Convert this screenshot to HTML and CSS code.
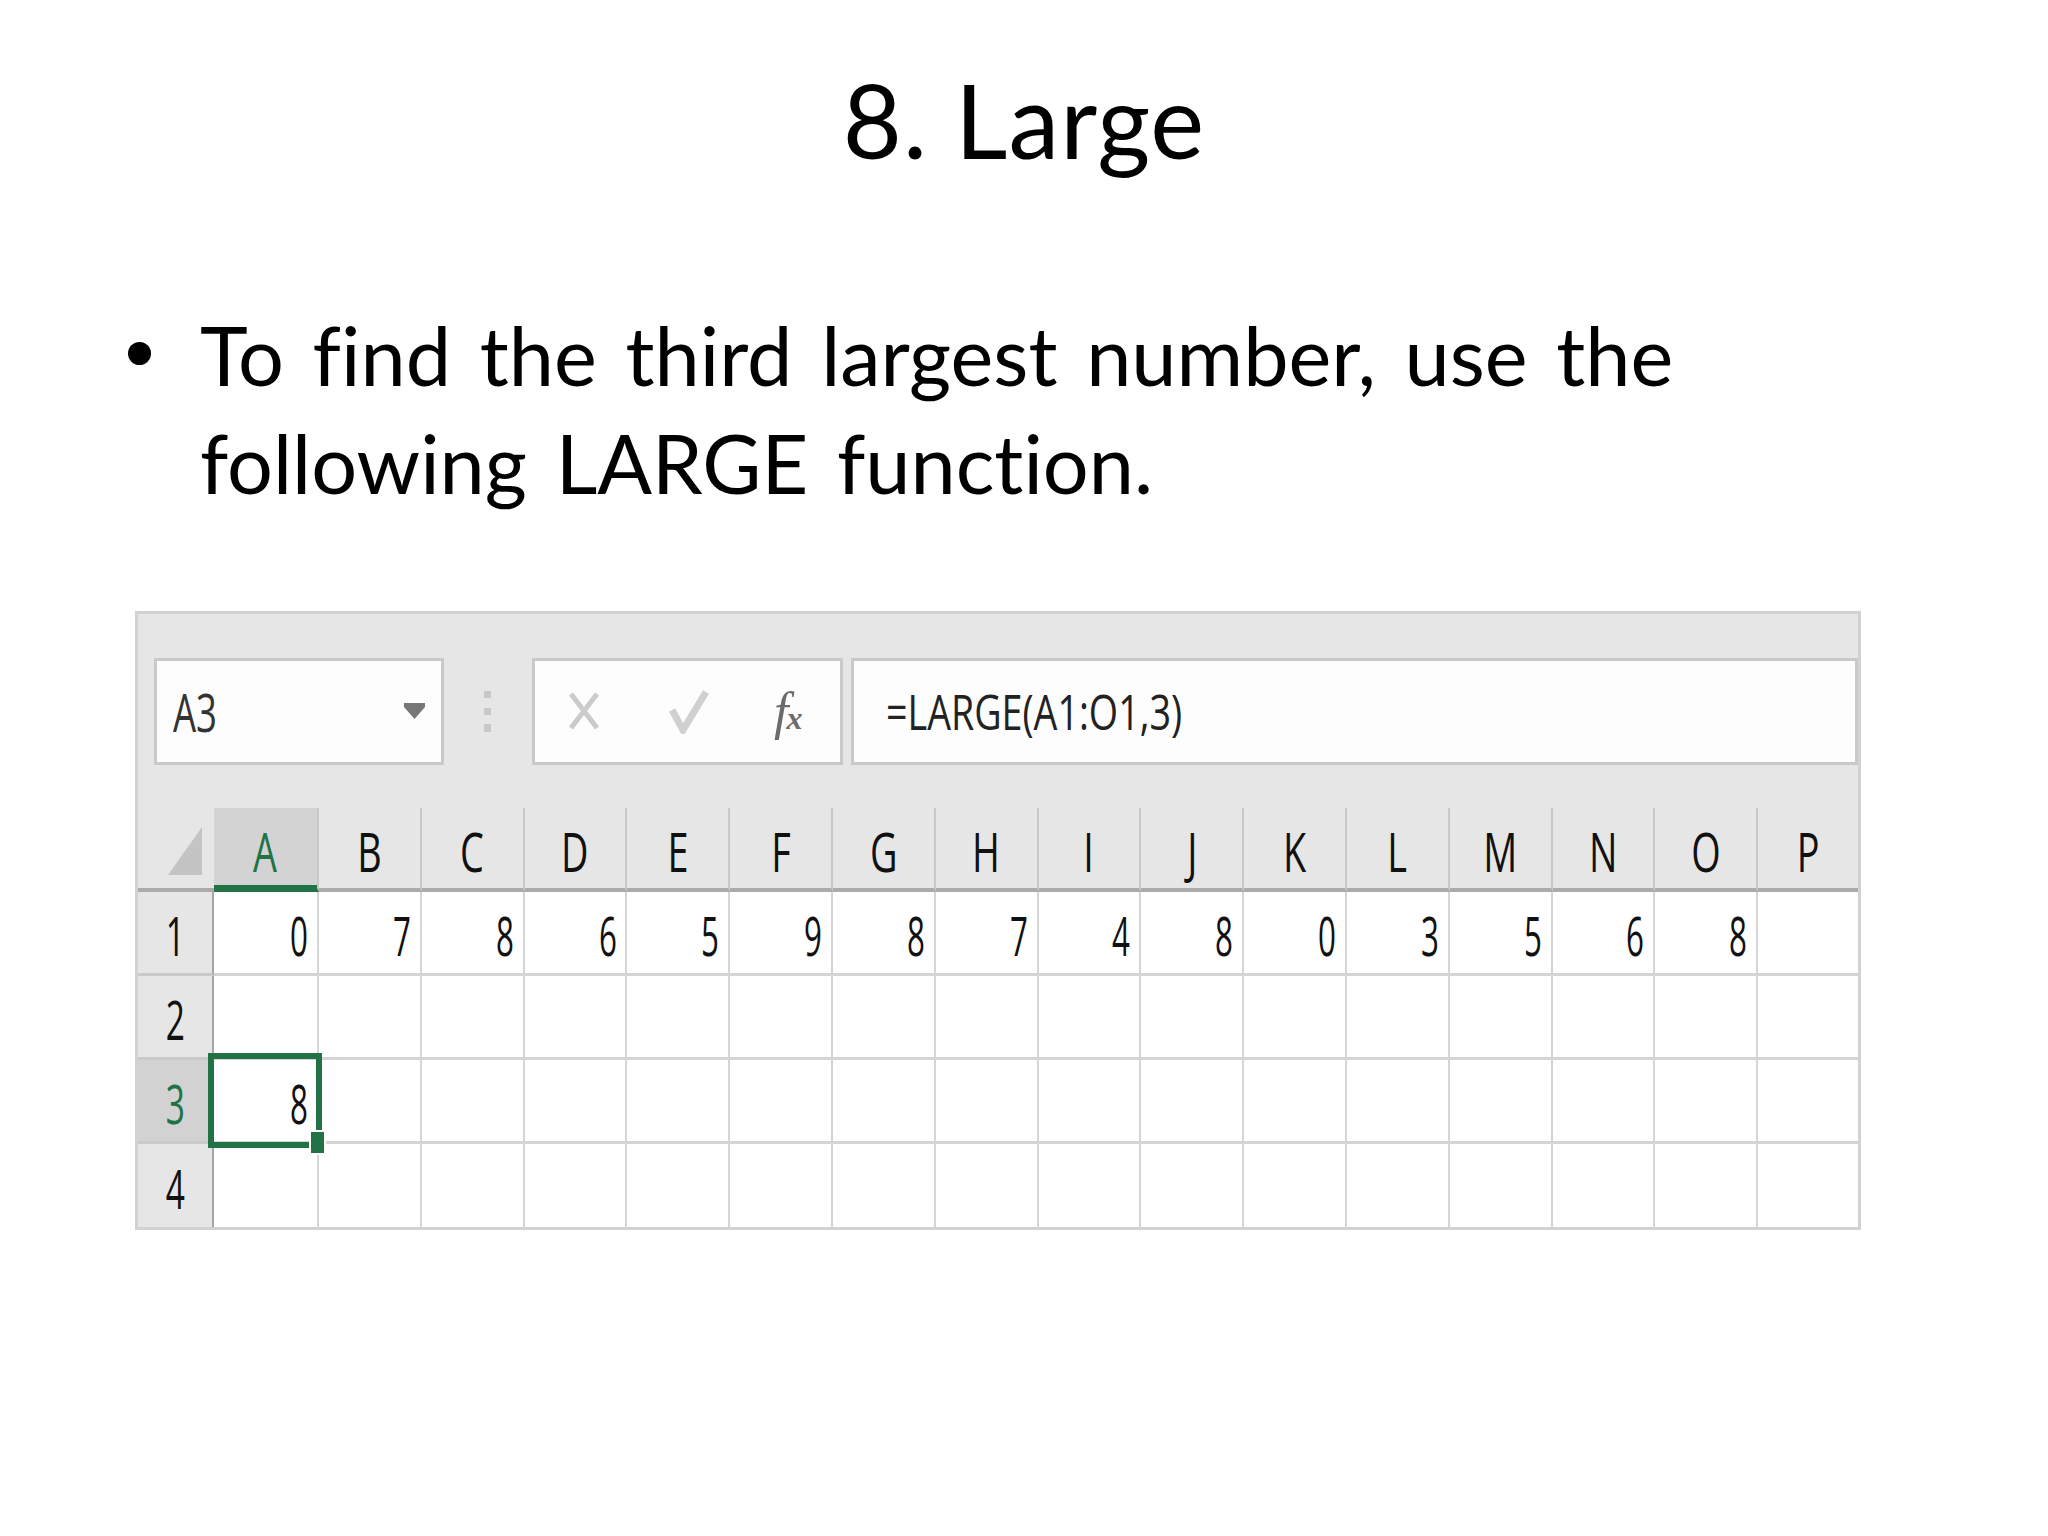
FILE: index.html
```html
<!DOCTYPE html>
<html>
<head>
<meta charset="utf-8">
<link rel="stylesheet" href="styles.css">
</head>
<body>
<div class="slide">
  <h1 class="title">8. Large</h1>
  <div class="bullet">
    <span class="dot"></span>
    <p class="btext">To find the third largest number, use the<br>following LARGE function.</p>
  </div>
  <div class="sheet">
    <div class="toolbar">
      <div class="namebox">
        <span class="sq nb-text">A3</span>
        <svg class="caret" width="21" height="16" viewBox="0 0 21 16"><polygon points="0,0 21,0 21,4 10.5,16 0,4" fill="#777"/></svg>
      </div>
      <svg class="dots" width="7" height="41" viewBox="0 0 7 41"><rect x="0" y="0" width="7" height="7" fill="#c8c8c8"/><rect x="0" y="17" width="7" height="7" fill="#c8c8c8"/><rect x="0" y="33" width="7" height="8" fill="#c8c8c8"/></svg>
      <div class="btnbox">
        <svg class="xicon" width="32" height="40" viewBox="0 0 32 40"><path d="M3 3 L29 37 M29 3 L3 37" stroke="#cbcbcb" stroke-width="5" fill="none"/></svg>
        <svg class="check" width="40" height="46" viewBox="0 0 40 46"><polyline points="3,22 14,42 37,4" stroke="#d0d0d0" stroke-width="7" fill="none" stroke-linejoin="miter"/></svg>
        <span class="fx"><i class="fx-f">f</i><i class="fx-x">x</i></span>
      </div>
      <div class="formula"><span class="sq fm-text">=LARGE(A1:O1,3)</span></div>
    </div>
    <div class="grid">
      <div class="corner"><svg width="76" height="80" viewBox="0 0 76 80"><polygon points="64,19 64,67 30,67" fill="#c4c4c4"/></svg></div>
      <div class="ch sel"><span>A</span></div>
      <div class="ch"><span>B</span></div>
      <div class="ch"><span>C</span></div>
      <div class="ch"><span>D</span></div>
      <div class="ch"><span>E</span></div>
      <div class="ch"><span>F</span></div>
      <div class="ch"><span>G</span></div>
      <div class="ch"><span>H</span></div>
      <div class="ch"><span>I</span></div>
      <div class="ch"><span>J</span></div>
      <div class="ch"><span>K</span></div>
      <div class="ch"><span>L</span></div>
      <div class="ch"><span>M</span></div>
      <div class="ch"><span>N</span></div>
      <div class="ch"><span>O</span></div>
      <div class="ch last"><span>P</span></div>

      <div class="rh"><span>1</span></div>
      <div class="c"><span>0</span></div>
      <div class="c"><span>7</span></div>
      <div class="c"><span>8</span></div>
      <div class="c"><span>6</span></div>
      <div class="c"><span>5</span></div>
      <div class="c"><span>9</span></div>
      <div class="c"><span>8</span></div>
      <div class="c"><span>7</span></div>
      <div class="c"><span>4</span></div>
      <div class="c"><span>8</span></div>
      <div class="c"><span>0</span></div>
      <div class="c"><span>3</span></div>
      <div class="c"><span>5</span></div>
      <div class="c"><span>6</span></div>
      <div class="c"><span>8</span></div>
      <div class="c last"></div>

      <div class="rh"><span>2</span></div>
      <div class="c"></div><div class="c"></div><div class="c"></div><div class="c"></div><div class="c"></div><div class="c"></div><div class="c"></div><div class="c"></div><div class="c"></div><div class="c"></div><div class="c"></div><div class="c"></div><div class="c"></div><div class="c"></div><div class="c"></div><div class="c last"></div>

      <div class="rh rsel"><span>3</span></div>
      <div class="c active"><span>8</span><div class="selbox"><div class="handle"></div></div></div>
      <div class="c"></div><div class="c"></div><div class="c"></div><div class="c"></div><div class="c"></div><div class="c"></div><div class="c"></div><div class="c"></div><div class="c"></div><div class="c"></div><div class="c"></div><div class="c"></div><div class="c"></div><div class="c"></div><div class="c last"></div>

      <div class="rh bottom"><span>4</span></div>
      <div class="c bottom"></div><div class="c bottom"></div><div class="c bottom"></div><div class="c bottom"></div><div class="c bottom"></div><div class="c bottom"></div><div class="c bottom"></div><div class="c bottom"></div><div class="c bottom"></div><div class="c bottom"></div><div class="c bottom"></div><div class="c bottom"></div><div class="c bottom"></div><div class="c bottom"></div><div class="c bottom"></div><div class="c bottom last"></div>
    </div>
  </div>
</div>
</body>
</html>
```
FILE: styles.css
```css
html, body {
  margin: 0;
  padding: 0;
  background: #ffffff;
}
.slide {
  width: 2048px;
  height: 1536px;
  font-family: Lato, "Open Sans", sans-serif;
  color: #000;
  overflow: hidden;
  font-variant-ligatures: none;
}
.title {
  margin: 0;
  padding-top: 60px;
  height: 120px;
  font-size: 102px;
  letter-spacing: 1px;
  line-height: 120px;
  font-weight: 400;
  text-align: center;
}
.bullet {
  display: flex;
  margin-top: 121px;
  padding-left: 128px;
}
.dot {
  flex: none;
  width: 23px;
  height: 23px;
  border-radius: 50%;
  background: #000;
  margin-top: 41px;
  margin-right: 49px;
}
.btext {
  margin: 0;
  font-size: 81px;
  line-height: 108px;
  word-spacing: 8px;
  white-space: nowrap;
}
.sheet {
  margin: 94px 0 0 135px;
  width: 1726px;
  box-sizing: border-box;
  border: 3px solid #d2d2d2;
  background: #e6e6e6;
  font-family: "Open Sans", "Noto Sans", sans-serif;
}
.toolbar {
  display: flex;
  align-items: center;
  height: 194px;
  padding-left: 16px;
}
.namebox, .btnbox, .formula {
  box-sizing: border-box;
  height: 107px;
  border: 3px solid #c9c9c9;
  background: #fdfdfd;
  display: flex;
  align-items: center;
}
.namebox {
  flex: none;
  width: 290px;
  justify-content: space-between;
  padding: 0 16px;
}
.sq {
  display: inline-block;
  transform-origin: left center;
  white-space: nowrap;
}
.nb-text {
  font-size: 53px;
  color: #333;
  transform: scaleX(0.69);
}
.caret { flex: none; }
.dots {
  flex: none;
  margin-left: 40px;
}
.btnbox {
  flex: none;
  width: 311px;
  margin-left: 41px;
  padding-left: 33px;
}
.check {
  margin-left: 69px;
}
.fx {
  margin-left: 65px;
  font-family: "Liberation Serif", "DejaVu Serif", serif;
  color: #6b6b6b;
  white-space: nowrap;
}
.fx-f {
  font-size: 52px;
}
.fx-x {
  font-size: 32px;
  font-weight: 700;
  margin-left: -2px;
}
.formula {
  flex: 1;
  margin-left: 8px;
  padding-left: 32px;
}
.fm-text {
  font-size: 50px;
  color: #222;
  transform: scaleX(0.753);
}
.grid {
  display: grid;
  grid-template-columns: 76px 105px repeat(14, 102.8px) 1fr;
  grid-template-rows: 84px 84px 84px 84px 83px;
  background: #fff;
}
.grid > div {
  box-sizing: border-box;
  display: flex;
  align-items: center;
  font-size: 54px;
  color: #111;
}
.grid span {
  display: inline-block;
  white-space: nowrap;
}
.corner {
  background: #e6e6e6;
  border-bottom: 4px solid #ababab;
}
.corner svg { display: block; }
.ch {
  background: #e6e6e6;
  border-right: 2px solid #c8c8c8;
  border-bottom: 4px solid #ababab;
  justify-content: center;
  padding-top: 6px;
}
.ch span {
  transform: scaleX(0.7);
}
.ch.sel {
  background: #d3d3d3;
  border-bottom-color: #217346;
  box-shadow: inset 0 -3px 0 #217346;
  color: #217346;
}
.ch.last, .c.last {
  border-right: none;
}
.rh {
  background: #e6e6e6;
  border-right: 2px solid #a5a5a5;
  border-bottom: 3px solid #cacaca;
  justify-content: center;
  padding-top: 4px;
}
.rh span {
  transform: scaleX(0.62);
}
.rh.rsel {
  background: #d2d2d2;
  color: #217346;
}
.c {
  border-right: 2px solid #d5d5d5;
  border-bottom: 3px solid #d5d5d5;
  justify-content: flex-end;
  padding-right: 9px;
  padding-top: 4px;
}
.c span {
  transform: scaleX(0.58);
  transform-origin: right center;
}
.grid > .bottom {
  border-bottom: none;
}
.c.active {
  position: relative;
}
.selbox {
  position: absolute;
  left: -6px;
  top: -7px;
  width: 114px;
  height: 95px;
  box-sizing: border-box;
  border: 6px solid #217346;
}
.handle {
  position: absolute;
  left: 95px;
  top: 71px;
  width: 17px;
  height: 25px;
  box-sizing: border-box;
  border: 2px solid #fff;
  background: #217346;
}
```
